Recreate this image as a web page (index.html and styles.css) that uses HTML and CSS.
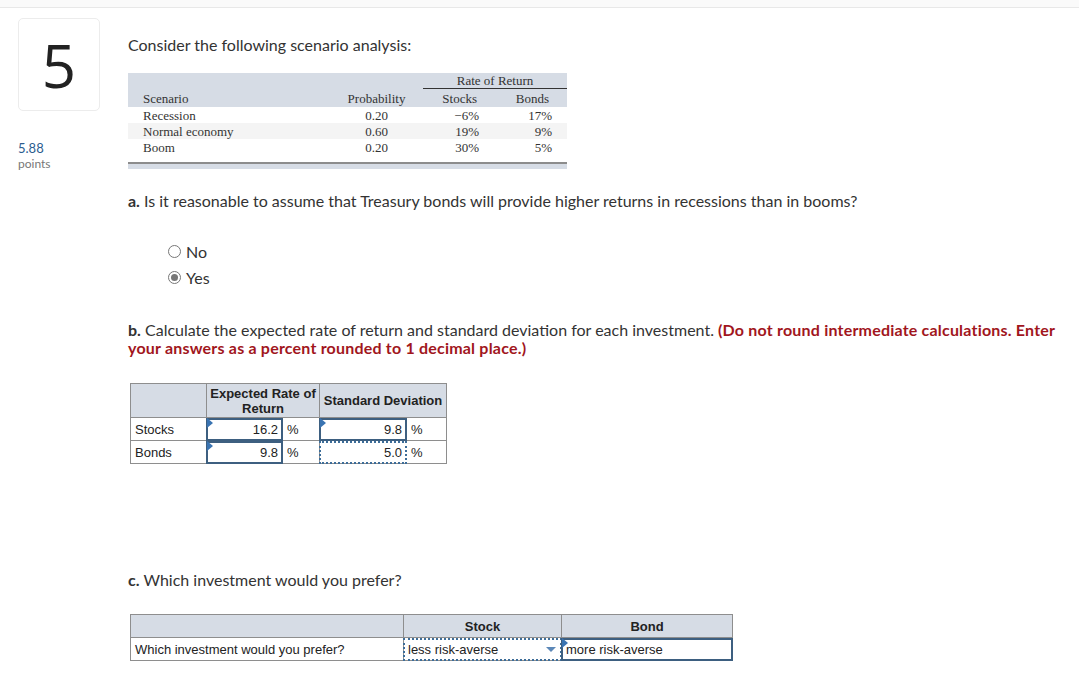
FILE: index.html
```html
<!DOCTYPE html>
<html>
<head>
<meta charset="utf-8">
<link rel="stylesheet" href="styles.css">
</head>
<body>
<div class="topbar"></div>
<div class="page">
  <div class="side">
    <div class="qnum">5</div>
    <div class="score">5.88</div>
    <div class="pts">points</div>
  </div>
  <div class="main">
    <p class="intro">Consider the following scenario analysis:</p>
    <div class="scen-wrap">
      <table class="scen">
        <colgroup><col class="c1"><col class="c2"><col class="c3"><col class="c4"></colgroup>
        <tr class="hd"><td></td><td></td><td colspan="2" class="ror"><span>Rate of Return</span></td></tr>
        <tr class="hd hd2"><td class="l">Scenario</td><td class="c">Probability</td><td class="sh">Stocks</td><td class="bh">Bonds</td></tr>
        <tr><td class="l">Recession</td><td class="c">0.20</td><td class="s">&minus;6%</td><td class="b">17%</td></tr>
        <tr class="alt"><td class="l">Normal economy</td><td class="c">0.60</td><td class="s">19%</td><td class="b">9%</td></tr>
        <tr><td class="l">Boom</td><td class="c">0.20</td><td class="s">30%</td><td class="b">5%</td></tr>
      </table>
      <div class="scen-foot"></div>
    </div>

    <p class="q qa"><b>a.</b> Is it reasonable to assume that Treasury bonds will provide higher returns in recessions than in booms?</p>
    <div class="radios">
      <div class="radio"><span class="dot"></span><span>No</span></div>
      <div class="radio"><span class="dot on"></span><span>Yes</span></div>
    </div>

    <p class="q qb"><b>b.</b> Calculate the expected rate of return and standard deviation for each investment. <b class="red">(Do not round intermediate calculations. Enter your answers as a percent rounded to 1 decimal place.)</b></p>

    <table class="ans">
      <tr class="ahd"><th class="w1"></th><th class="w2">Expected Rate of Return</th><th class="w3">Standard Deviation</th></tr>
      <tr><td class="lbl">Stocks</td>
        <td><div class="fld"><span class="inp i2 flag">16.2</span><span class="pct">%</span></div></td>
        <td><div class="fld"><span class="inp i3 flag">9.8</span><span class="pct">%</span></div></td></tr>
      <tr><td class="lbl">Bonds</td>
        <td><div class="fld"><span class="inp i2 flag">9.8</span><span class="pct">%</span></div></td>
        <td><div class="fld"><span class="inp i3 dotted">5.0</span><span class="pct">%</span></div></td></tr>
    </table>

    <p class="q qc"><b>c.</b> Which investment would you prefer?</p>

    <table class="pref">
      <tr class="ahd"><th class="p1"></th><th class="p2">Stock</th><th class="p3">Bond</th></tr>
      <tr><td class="lbl">Which investment would you prefer?</td>
        <td class="selcell"><div class="sel dotted"><span>less risk-averse</span><span class="arrow"></span></div></td>
        <td class="selcell"><div class="sel solid flag"><span>more risk-averse</span></div></td></tr>
    </table>
  </div>
</div>
</body>
</html>
```

FILE: styles.css
```css
* { box-sizing: border-box; }
html, body { margin: 0; padding: 0; background: #fff; }
body { font-family: "Lato", "Open Sans", sans-serif; color: #333; }

.topbar { height: 8px; background: #fafafa; border-bottom: 1px solid #e8e8e8; }

.page { display: flex; }

.side { width: 128px; padding-left: 18px; padding-top: 10px; flex: none; }
.qnum {
  width: 82px; height: 93px;
  border: 1px solid #ececec; border-radius: 5px;
  display: flex; align-items: center; justify-content: center;
  font-family: "Open Sans", sans-serif; font-size: 60px; color: #222;
  line-height: 1;
}
.score { margin-top: 29px; font-size: 13px; color: #2c5d8f; line-height: 16px; }
.pts { font-size: 12px; color: #777; line-height: 16px; }

.main { flex: 1; padding-top: 27px; padding-right: 22px; }
p { margin: 0; }
.intro { font-size: 16px; line-height: 20px; }

.scen-wrap { width: 439px; margin-top: 18px; }
.scen {
  width: 439px; border-collapse: collapse; table-layout: fixed;
  font-family: "Liberation Serif", serif; font-size: 13px; color: #333;
}
.scen td { padding: 0; height: 16px; line-height: 15px; white-space: nowrap; }
.scen .c1 { width: 202px; }
.scen .c2 { width: 93px; }
.scen .c3 { width: 67px; }
.scen .c4 { width: 77px; }
.scen .hd { background: #d6dce5; }
.scen .hd td { height: 17px; }
.scen .ror { text-align: center; padding-top: 1px; vertical-align: top; }
.scen .ror span { display: block; border-bottom: 1px solid #333; padding-bottom: 0; line-height: 14px; }
.scen .l { padding-left: 15px; }
.scen .c { text-align: center; }
.scen .s { text-align: right; padding-right: 11px; }
.scen .b { text-align: right; padding-right: 15px; }
.scen .sh { text-align: right; padding-right: 13px; }
.scen .bh { text-align: right; padding-right: 18px; }
.scen .alt { background: #f4f4f4; }
.scen-foot { height: 7px; margin-top: 7px; background: #d6dce5; border-top: 2px solid #8c8c8c; }

.q { font-size: 16px; line-height: 19px; }
.red { letter-spacing: 0.2px; color: #a1161d; }
.qa { margin-top: 22px; }
.radios { margin-top: 28px; padding-left: 40px; }
.radio { display: flex; align-items: center; height: 26px; font-size: 16px; }
.dot {
  width: 13px; height: 13px; border-radius: 50%;
  border: 1px solid #777; margin-right: 5px; position: relative; background: #fff;
}
.dot.on::after {
  content: ""; position: absolute; left: 2px; top: 2px; width: 7px; height: 7px;
  border-radius: 50%; background: #777;
}
.qb { margin-top: 31px; line-height: 18px; }

.ans, .pref {
  border-collapse: collapse; font-family: "Liberation Sans", Arial, sans-serif;
  font-size: 13px; color: #222; margin-left: 2px;
}
.ans { margin-top: 26px; width: 316px; table-layout: fixed; }
.ans th, .ans td, .pref th, .pref td { border: 1px solid #8e8e8e; padding: 0; }
.ahd { background: #d6dce5; }
.ans th { height: 34px; font-weight: bold; line-height: 15px; }
.ans .w1 { width: 76px; }
.ans .w2 { width: 113px; }
.ans .w3 { width: 127px; }
.ans td { height: 23px; }
.lbl { padding-left: 4px !important; }
.fld { display: flex; align-items: center; height: 22px; }
.inp {
  height: 23px; border: 2px solid #3d5f80; text-align: right; padding-right: 3px;
  line-height: 19px; position: relative; margin: -1px 0 -1px -1px;
}
.i2 { width: 77px; }
.i3 { width: 88px; }
.pct { padding-left: 4px; }
.dotted { border: 2px dotted #3d6d99; }
.flag::before {
  content: ""; position: absolute; left: -1px; top: -1px;
  border-top: 5px solid transparent; border-bottom: 5px solid transparent;
  border-left: 6px solid #3a74b2; transform: translateY(-1px);
}

.qc { margin-top: 106px; }
.pref { margin-top: 25px; width: 602px; table-layout: fixed; font-size: 13px; }
.pref th { height: 23px; font-weight: bold; }
.pref .p1 { width: 273px; }
.pref .p2 { width: 158px; }
.pref .p3 { width: 171px; }
.pref td { height: 23px; }
.selcell { position: relative; }
.sel {
  display: flex; align-items: center; justify-content: space-between;
  height: 23px; margin: -1px; padding-left: 3px; position: relative;
}
.sel.solid { border: 2px solid #3d5f80; }
.arrow {
  width: 0; height: 0; margin-right: 4px;
  border-left: 5px solid transparent; border-right: 5px solid transparent;
  border-top: 5px solid #5c88b8;
}
```
